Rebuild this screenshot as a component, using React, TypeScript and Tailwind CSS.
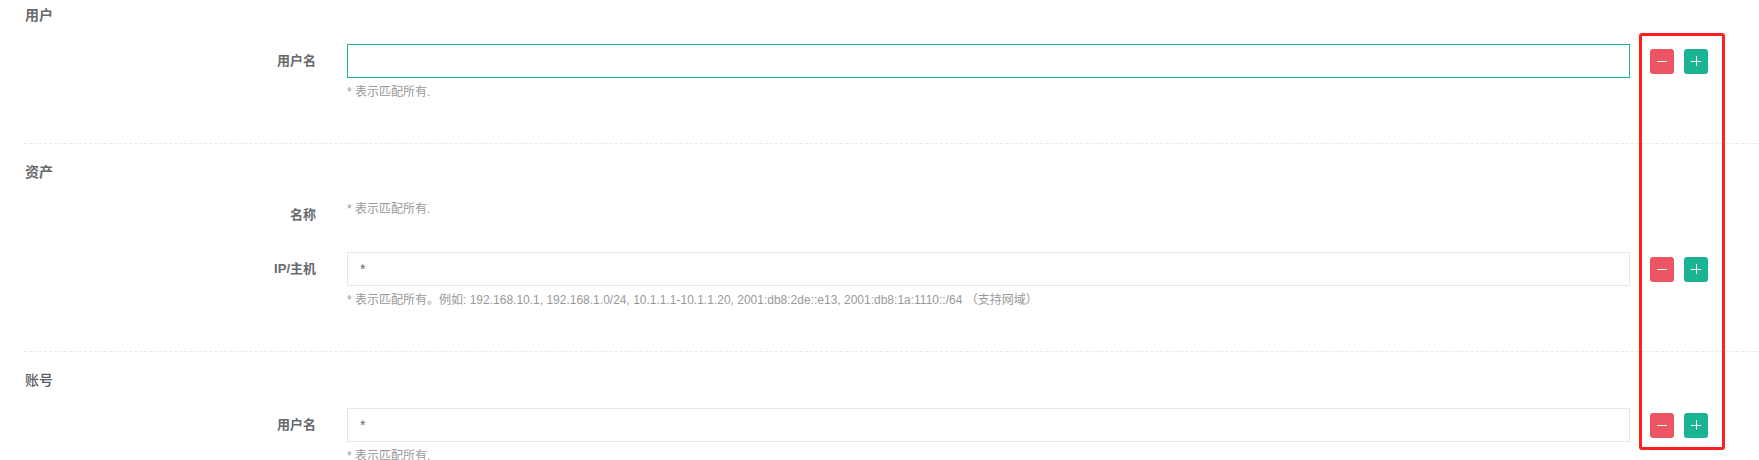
import React from "react";

const font = { fontFamily: '"Liberation Sans", "Noto Sans CJK SC", Arial, sans-serif' };

function Buttons() {
  return (
    <div className="ml-[20px] flex gap-[10px] items-center h-full">
      <div className="w-[24px] h-[25px] rounded-[3px] bg-[#ed5565] flex items-center justify-center">
        <svg width="12" height="12" viewBox="0 0 12 12">
          <line x1="1" y1="6.5" x2="11" y2="6.5" stroke="white" strokeWidth="1" />
        </svg>
      </div>
      <div className="w-[24px] h-[25px] rounded-[3px] bg-[#1ab394] flex items-center justify-center">
        <svg width="12" height="12" viewBox="0 0 12 12">
          <line x1="1" y1="6.5" x2="11" y2="6.5" stroke="white" strokeWidth="1" />
          <line x1="6.5" y1="1" x2="6.5" y2="11" stroke="white" strokeWidth="1" />
        </svg>
      </div>
    </div>
  );
}

function InputRow({ label, value, focused }: { label: string; value: string; focused?: boolean }) {
  return (
    <div className="flex items-center h-[34px]">
      <div className="w-[316px] text-right text-[13px] font-bold text-[#676a6c] leading-[20px]">
        {label}
      </div>
      <div
        className={
          "ml-[31px] w-[1283px] h-[34px] border bg-white flex items-center px-[12px] text-[14px] text-[#676a6c] " +
          (focused ? "border-[#1ab394]" : "border-[#e5e6e7]")
        }
      >
        {value}
      </div>
      <Buttons />
    </div>
  );
}

function Help({ children }: { children: React.ReactNode }) {
  return (
    <div className="mt-[6px] ml-[347px] text-[12px] leading-[17px] text-[#999999] whitespace-nowrap">
      {children}
    </div>
  );
}

function Divider() {
  return <div className="mt-[42px] ml-[24px] border-t border-dashed border-[#e7eaec]" />;
}

export default function App() {
  return (
    <div className="relative w-[1759px] h-[460px] overflow-hidden bg-white" style={font}>
      <div className="pt-[5px]">
        {/* 用户 */}
        <div className="ml-[25px] h-[20px] leading-[20px] text-[14px] font-bold text-[#676a6c]">用户</div>
        <div className="mt-[19px]">
          <InputRow label="用户名" value="" focused />
        </div>
        <Help>* 表示匹配所有.</Help>
        <Divider />

        {/* 资产 */}
        <div className="mt-[18px] ml-[25px] h-[20px] leading-[20px] text-[14px] font-bold text-[#676a6c]">资产</div>
        <div className="mt-[19px] h-[24px] flex items-start">
          <div className="w-[316px] pt-[4px] text-right text-[13px] font-bold text-[#676a6c] leading-[20px]">名称</div>
          <div className="ml-[31px] text-[12px] leading-[17px] text-[#999999]">* 表示匹配所有.</div>
        </div>
        <div className="mt-[27px]">
          <InputRow label="IP/主机" value="*" />
        </div>
        <Help>
          * 表示匹配所有。例如: 192.168.10.1, 192.168.1.0/24, 10.1.1.1-10.1.1.20, 2001:db8:2de::e13, 2001:db8:1a:1110::/64 （支持网域）
        </Help>
        <Divider />

        {/* 账号 */}
        <div className="mt-[18px] ml-[25px] h-[20px] leading-[20px] text-[14px] font-medium text-[#5a5d5f]">账号</div>
        <div className="mt-[18px]">
          <InputRow label="用户名" value="*" />
        </div>
        <Help>* 表示匹配所有.</Help>
      </div>

      {/* red annotation box */}
      <div className="absolute left-[1639px] top-[33px] w-[86px] h-[417px] border-[3px] border-[#ff1f1f] rounded-[3px] pointer-events-none" />
    </div>
  );
}
